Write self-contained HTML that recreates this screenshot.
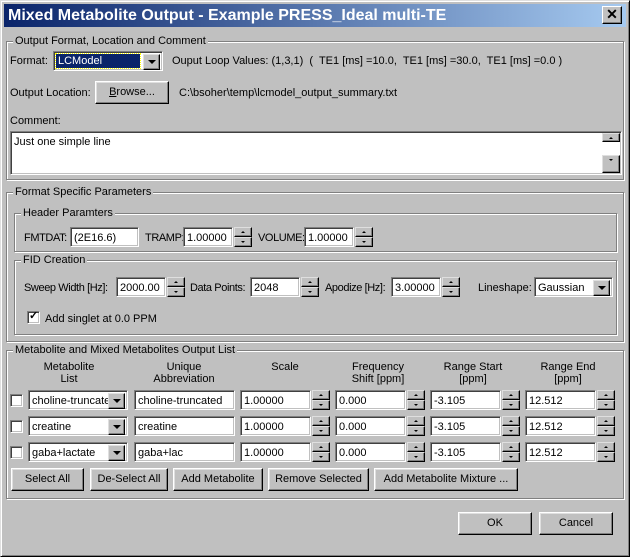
<!DOCTYPE html>
<html><head><meta charset="utf-8"><style>
*{box-sizing:border-box}
body{margin:0;width:630px;height:557px;overflow:hidden;background:#c0c0c0;font-family:"Liberation Sans",sans-serif;font-size:11px;color:#000}
#win{position:absolute;left:0;top:0;width:630px;height:557px;border:1px solid;border-color:#dfdfdf #000 #000 #dfdfdf;box-shadow:inset 1px 1px #fff,inset -1px -1px #808080;background:#c0c0c0}
.a{position:absolute;white-space:nowrap}
#title{left:3px;top:3px;width:622px;height:23px;background:linear-gradient(90deg,#0a246a,#a6caf0);color:#fff;font-weight:bold;font-size:16px;line-height:23px;padding-left:4px}
#close{right:4px;top:2px;width:20px;height:18px;background:#c0c0c0;border:1px solid;border-color:#fff #000 #000 #fff;box-shadow:inset -1px -1px #808080;color:#000;font-size:14px;line-height:15px;text-align:center}
.grp{position:absolute;border:1px solid #808080;box-shadow:1px 1px #fff,inset 1px 1px #fff}
.gl{position:absolute;top:-7px;left:6px;background:#c0c0c0;padding:0 2px;line-height:13px}
.in{position:absolute;background:#fff;border:1px solid;border-color:#808080 #fff #fff #808080;box-shadow:inset 1px 1px #404040,inset -1px -1px #c0c0c0;padding:2px 3px 0;line-height:16px;height:20px;overflow:hidden}
.btn{position:absolute;background:#c0c0c0;border:1px solid;border-color:#fff #000 #000 #fff;box-shadow:inset -1px -1px #808080,inset 1px 1px #dfdfdf;text-align:center;line-height:20px;height:23px}
.sp{position:absolute;width:18px;height:20px}
.sp div{position:absolute;left:0;width:18px;height:10px;background:#c0c0c0;border:1px solid;border-color:#dfdfdf #000 #000 #dfdfdf;box-shadow:inset -1px -1px #808080}
.sp div:after{content:"";position:absolute;left:6px;border-left:2px solid transparent;border-right:2px solid transparent}
.sp .u{top:0}.sp .u:after{top:3px;border-bottom:2px solid #000}
.sp .d{top:10px}.sp .d:after{top:3px;border-top:2px solid #000}
.dd{position:absolute;top:2px;right:2px;width:17px;height:16px;background:#c0c0c0;border:1px solid;border-color:#dfdfdf #000 #000 #dfdfdf;box-shadow:inset -1px -1px #808080}
.dd:after{content:"";position:absolute;left:4px;top:5px;border-left:4px solid transparent;border-right:4px solid transparent;border-top:4px solid #000}
.cb{position:absolute;width:13px;height:13px;background:#fff;border:1px solid;border-color:#808080 #fff #fff #808080;box-shadow:inset 1px 1px #404040,inset -1px -1px #c0c0c0}
.c{text-align:center;line-height:12px}
.t{letter-spacing:-0.4px}
</style></head><body><div id="win">
<div id="title" class="a">Mixed Metabolite Output - Example PRESS_Ideal multi-TE<div id="close" class="a">✕</div></div>

<div class="grp" style="left:5px;top:40px;width:618px;height:139px"><div class="gl">Output Format, Location and Comment</div></div>
<div class="a" style="left:9px;top:54px">Format:</div>
<div class="in" style="left:52px;top:50px;width:110px;padding:0 2px"><div style="background:#0a246a;color:#fff;outline:1px dotted #ff0;width:84px;height:14px;line-height:14px;margin-top:2px;padding-left:2px">LCModel</div><div class="dd"></div></div>
<div class="a" style="left:171px;top:54px">Ouput Loop Values: (1,3,1)&nbsp; (&nbsp; TE1 [ms] =10.0,&nbsp; TE1 [ms] =30.0,&nbsp; TE1 [ms] =0.0 )</div>
<div class="a" style="left:9px;top:86px">Output Location:</div>
<div class="btn" style="left:94px;top:80px;width:74px"><u>B</u>rowse...</div>
<div class="a" style="left:178px;top:86px">C:\bsoher\temp\lcmodel_output_summary.txt</div>
<div class="a" style="left:9px;top:114px">Comment:</div>
<div class="in" style="left:9px;top:130px;width:612px;height:44px">Just one simple line</div>
<div class="sp" style="left:601px;top:132px;height:40px"><div class="u" style="height:9px"></div><div class="d" style="top:22px;height:18px"></div></div>

<div class="grp" style="left:5px;top:191px;width:618px;height:150px"><div class="gl">Format Specific Parameters</div></div>
<div class="grp" style="left:13px;top:212px;width:603px;height:39px"><div class="gl">Header Paramters</div></div>
<div class="a t" style="left:23px;top:231px">FMTDAT:</div>
<div class="in" style="left:69px;top:226px;width:69px">(2E16.6)</div>
<div class="a t" style="left:144px;top:231px">TRAMP:</div>
<div class="in" style="left:182px;top:226px;width:50px">1.00000</div>
<div class="sp" style="left:233px;top:226px"><div class="u"></div><div class="d"></div></div>
<div class="a t" style="left:257px;top:231px">VOLUME:</div>
<div class="in" style="left:303px;top:226px;width:50px">1.00000</div>
<div class="sp" style="left:354px;top:226px"><div class="u"></div><div class="d"></div></div>

<div class="grp" style="left:13px;top:259px;width:603px;height:75px"><div class="gl">FID Creation</div></div>
<div class="a t" style="left:23px;top:281px">Sweep Width [Hz]:</div>
<div class="in" style="left:115px;top:276px;width:50px">2000.00</div>
<div class="sp" style="left:166px;top:276px"><div class="u"></div><div class="d"></div></div>
<div class="a t" style="left:189px;top:281px">Data Points:</div>
<div class="in" style="left:249px;top:276px;width:50px">2048</div>
<div class="sp" style="left:300px;top:276px"><div class="u"></div><div class="d"></div></div>
<div class="a t" style="left:324px;top:281px">Apodize [Hz]:</div>
<div class="in" style="left:390px;top:276px;width:50px">3.00000</div>
<div class="sp" style="left:441px;top:276px"><div class="u"></div><div class="d"></div></div>
<div class="a" style="left:477px;top:281px">Lineshape:</div>
<div class="in" style="left:533px;top:276px;width:79px">Gaussian<div class="dd"></div></div>
<div class="cb" style="left:26px;top:310px"><div style="position:absolute;left:1px;top:-3px;font-size:11px;font-weight:bold">✓</div></div>
<div class="a" style="left:44px;top:312px">Add singlet at 0.0 PPM</div>

<div class="grp" style="left:5px;top:349px;width:618px;height:149px"><div class="gl">Metabolite and Mixed Metabolites Output List</div></div>
<div class="a c" style="left:27px;top:360px;width:82px">Metabolite<br>List</div>
<div class="a c" style="left:133px;top:360px;width:100px">Unique<br>Abbreviation</div>
<div class="a c" style="left:239px;top:360px;width:90px">Scale</div>
<div class="a c" style="left:334px;top:360px;width:86px">Frequency<br>Shift [ppm]</div>
<div class="a c" style="left:429px;top:360px;width:86px">Range Start<br>[ppm]</div>
<div class="a c" style="left:524px;top:360px;width:86px">Range End<br>[ppm]</div>

<div class="cb" style="left:9px;top:393px"></div>
<div class="in" style="left:27px;top:389px;width:100px">choline-truncated<div class="dd"></div></div>
<div class="in" style="left:133px;top:389px;width:101px">choline-truncated</div>
<div class="in" style="left:239px;top:389px;width:71px">1.00000</div>
<div class="sp" style="left:311px;top:389px"><div class="u"></div><div class="d"></div></div>
<div class="in" style="left:334px;top:389px;width:71px">0.000</div>
<div class="sp" style="left:406px;top:389px"><div class="u"></div><div class="d"></div></div>
<div class="in" style="left:429px;top:389px;width:71px">-3.105</div>
<div class="sp" style="left:501px;top:389px"><div class="u"></div><div class="d"></div></div>
<div class="in" style="left:524px;top:389px;width:71px">12.512</div>
<div class="sp" style="left:596px;top:389px"><div class="u"></div><div class="d"></div></div>

<div class="cb" style="left:9px;top:419px"></div>
<div class="in" style="left:27px;top:415px;width:100px">creatine<div class="dd"></div></div>
<div class="in" style="left:133px;top:415px;width:101px">creatine</div>
<div class="in" style="left:239px;top:415px;width:71px">1.00000</div>
<div class="sp" style="left:311px;top:415px"><div class="u"></div><div class="d"></div></div>
<div class="in" style="left:334px;top:415px;width:71px">0.000</div>
<div class="sp" style="left:406px;top:415px"><div class="u"></div><div class="d"></div></div>
<div class="in" style="left:429px;top:415px;width:71px">-3.105</div>
<div class="sp" style="left:501px;top:415px"><div class="u"></div><div class="d"></div></div>
<div class="in" style="left:524px;top:415px;width:71px">12.512</div>
<div class="sp" style="left:596px;top:415px"><div class="u"></div><div class="d"></div></div>

<div class="cb" style="left:9px;top:445px"></div>
<div class="in" style="left:27px;top:441px;width:100px">gaba+lactate<div class="dd"></div></div>
<div class="in" style="left:133px;top:441px;width:101px">gaba+lac</div>
<div class="in" style="left:239px;top:441px;width:71px">1.00000</div>
<div class="sp" style="left:311px;top:441px"><div class="u"></div><div class="d"></div></div>
<div class="in" style="left:334px;top:441px;width:71px">0.000</div>
<div class="sp" style="left:406px;top:441px"><div class="u"></div><div class="d"></div></div>
<div class="in" style="left:429px;top:441px;width:71px">-3.105</div>
<div class="sp" style="left:501px;top:441px"><div class="u"></div><div class="d"></div></div>
<div class="in" style="left:524px;top:441px;width:71px">12.512</div>
<div class="sp" style="left:596px;top:441px"><div class="u"></div><div class="d"></div></div>

<div class="btn" style="left:10px;top:467px;width:73px">Select All</div>
<div class="btn" style="left:89px;top:467px;width:78px">De-Select All</div>
<div class="btn" style="left:172px;top:467px;width:90px">Add Metabolite</div>
<div class="btn" style="left:267px;top:467px;width:101px">Remove Selected</div>
<div class="btn" style="left:373px;top:467px;width:144px">Add Metabolite Mixture ...</div>

<div class="btn" style="left:457px;top:511px;width:74px">OK</div>
<div class="btn" style="left:538px;top:511px;width:74px">Cancel</div>
</div></body></html>
